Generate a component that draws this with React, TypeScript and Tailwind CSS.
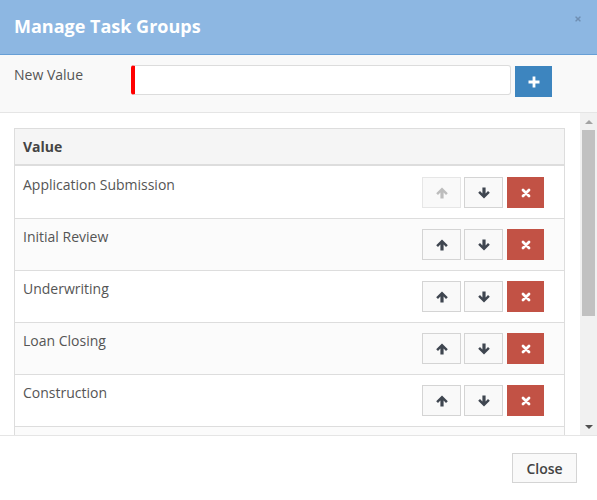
import { FaTimes } from 'react-icons/fa';

const groups = ['Application Submission', 'Initial Review', 'Underwriting', 'Loan Closing', 'Construction'];

function ArrowIcon({ down = false }: { down?: boolean }) {
    return (
        <svg viewBox="0 0 12 12" className={`w-[12px] h-[12px] ${down ? 'rotate-180' : ''}`} fill="currentColor">
            <path d="M6 0.5 L11.8 6.2 L10 8 L7.6 5.6 V11.5 H4.4 V5.6 L2 8 L0.2 6.2 Z" />
        </svg>
    );
}

function CrossIcon() {
    return (
        <svg viewBox="0 0 10 10" className="w-[10px] h-[10px]" stroke="currentColor" strokeWidth="2.8" strokeLinecap="round">
            <path d="M2 2 L8 8 M8 2 L2 8" />
        </svg>
    );
}

function PlusIcon() {
    return (
        <svg viewBox="0 0 12 12" className="w-[12px] h-[12px]" fill="currentColor">
            <path d="M4.6 0.5 H7.4 V4.6 H11.5 V7.4 H7.4 V11.5 H4.6 V7.4 H0.5 V4.6 H4.6 Z" />
        </svg>
    );
}

function RowButtons({ first }: { first: boolean }) {
    return (
        <div className="flex items-center gap-[3px]">
            <button
                className={`w-[39px] h-[31px] flex items-center justify-center bg-[#f9f9f9] border ${
                    first ? 'border-[#e6e6e6] text-[#bdbdbd]' : 'border-[#d4d4d4] text-[#3f4650]'
                }`}
            >
                <ArrowIcon />
            </button>
            <button className="w-[39px] h-[31px] flex items-center justify-center bg-[#f9f9f9] border border-[#d4d4d4] text-[#3f4650]">
                <ArrowIcon down />
            </button>
            <button className="w-[37px] h-[31px] ml-[1px] flex items-center justify-center bg-[#c25245] text-white">
                <CrossIcon />
            </button>
        </div>
    );
}

export default function App() {
    return (
        <div
            className="w-[597px] h-[500px] flex flex-col bg-white overflow-hidden"
            style={{ fontFamily: '"Open Sans", "Liberation Sans", sans-serif' }}
        >
            {/* Header */}
            <div className="h-[55px] shrink-0 flex items-center justify-between bg-[#8db7e2] border-b border-[#679fd6] pl-[14px] pr-[15px]">
                <h1 className="text-[18px] font-bold text-white leading-none -mt-[2px]">Manage Task Groups</h1>
                <FaTimes className="w-[8px] h-[8px] text-[#6f8fb3] -mt-[17px]" />
            </div>

            {/* New value form */}
            <div className="h-[58px] shrink-0 flex bg-[#f9f9f9] border-b border-[#e5e5e5] pt-[10px]">
                <label className="w-[131px] shrink-0 pl-[14px] text-[14px] text-[#555] leading-[20px]">New Value</label>
                <div className="w-[380px] h-[30px] bg-white border border-[#dcdcdc] border-l-[4px] border-l-[#f00] rounded-[3px]" />
                <button className="w-[37px] h-[31px] ml-[4px] mt-[1px] flex items-center justify-center bg-[#3d85bf] text-white">
                    <PlusIcon />
                </button>
            </div>

            {/* Scroll area */}
            <div className="h-[322px] shrink-0 flex">
                <div className="flex-1 overflow-hidden pt-[15px] pl-[14px] pr-[15px]">
                    <div className="border border-[#dddddd] border-b-0">
                        <div className="h-[37px] flex items-center px-[8px] bg-[#f5f5f5] border-b-2 border-[#dddddd] text-[14px] font-bold text-[#444]">
                            Value
                        </div>
                        {groups.map((g, i) => (
                            <div
                                key={g}
                                className={`h-[52px] flex justify-between pl-[8px] pr-[20px] ${
                                    i > 0 ? 'border-t border-[#dddddd] pt-[8px]' : 'pt-[9px]'
                                } ${i % 2 === 1 ? 'bg-[#fbfbfb]' : 'bg-white'}`}
                            >
                                <span className="text-[14px] leading-[20px] text-[#555]">{g}</span>
                                <div className="pt-[2px]">
                                    <RowButtons first={i === 0} />
                                </div>
                            </div>
                        ))}
                        {/* next row, scrolled out of view */}
                        <div className="h-[52px] border-t border-[#dddddd] bg-[#fbfbfb]" />
                    </div>
                </div>
                {/* scrollbar */}
                <div className="w-[17px] flex flex-col bg-[#f1f1f1]">
                    <div className="h-[17px] flex items-center justify-center">
                        <div className="w-0 h-0 border-l-[4px] border-r-[4px] border-b-[4px] border-l-transparent border-r-transparent border-b-[#a3a3a3]" />
                    </div>
                    <div className="mx-[2px] h-[186px] bg-[#c1c1c1]" />
                    <div className="flex-1" />
                    <div className="h-[17px] flex items-center justify-center">
                        <div className="w-0 h-0 border-l-[4px] border-r-[4px] border-t-[4px] border-l-transparent border-r-transparent border-t-[#505050]" />
                    </div>
                </div>
            </div>

            {/* Footer */}
            <div className="flex-1 flex justify-end border-t border-[#e5e5e5] pt-[17px] pr-[20px]">
                <button className="w-[65px] h-[30px] bg-[#f9f9f9] border border-[#d4d4d4] text-[14px] font-semibold text-[#444]">
                    Close
                </button>
            </div>
        </div>
    );
}
